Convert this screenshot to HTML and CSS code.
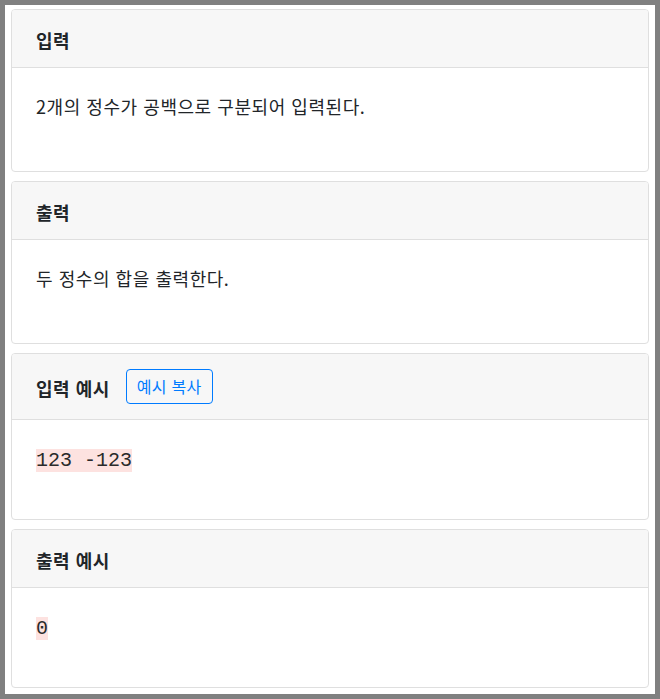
FILE: index.html
```html
<!DOCTYPE html>
<html lang="ko">
<head>
<meta charset="utf-8">
<title>문제</title>
<link rel="stylesheet" href="styles.css">
</head>
<body>
<div class="frame">
  <section class="card">
    <div class="card-header"><h3 class="title">입력</h3></div>
    <div class="card-body text-body"><p>2개의 정수가 공백으로 구분되어 입력된다.</p></div>
  </section>
  <section class="card">
    <div class="card-header"><h3 class="title">출력</h3></div>
    <div class="card-body text-body"><p>두 정수의 합을 출력한다.</p></div>
  </section>
  <section class="card">
    <div class="card-header tall"><h3 class="title">입력 예시</h3><button class="copy-btn" type="button">예시 복사</button></div>
    <div class="card-body code-body"><pre class="sample"><code>123 -123</code></pre></div>
  </section>
  <section class="card">
    <div class="card-header"><h3 class="title">출력 예시</h3></div>
    <div class="card-body code-body"><pre class="sample"><code>0</code></pre></div>
  </section>
</div>
</body>
</html>
```
FILE: styles.css
```css
html, body {
  margin: 0;
  padding: 0;
}
body {
  width: 660px;
  height: 699px;
  font-family: "Noto Sans CJK KR", "Noto Sans", sans-serif;
  color: #212529;
  background: #ffffff;
}
.frame {
  box-sizing: border-box;
  width: 660px;
  height: 699px;
  border: 5px solid #808080;
  background: #ffffff;
  padding: 4px 6px 0 6px;
  display: flex;
  flex-direction: column;
  gap: 9px;
}
.card {
  border: 1px solid #dfdfdf;
  border-radius: 4px;
  background: #ffffff;
  overflow: hidden;
}
.card-header {
  box-sizing: border-box;
  min-height: 58px;
  background: #f7f7f7;
  border-bottom: 1px solid #dfdfdf;
  padding: 0 24px;
  display: flex;
  align-items: center;
  gap: 16px;
}
.card-header.tall {
  min-height: 66px;
}
.title {
  margin: 2px 0 0 0;
  font-size: 18px;
  font-weight: 700;
  letter-spacing: 0.5px;
  line-height: 24px;
}
.copy-btn {
  box-sizing: border-box;
  height: 35px;
  padding: 0 10px;
  border: 1px solid #007bff;
  border-radius: 4px;
  background: transparent;
  color: #007bff;
  font-family: "Noto Sans CJK KR", "Noto Sans", sans-serif;
  font-size: 16px;
  letter-spacing: 0.3px;
  line-height: 33px;
}
.text-body {
  padding: 25px 24px 52px 24px;
}
.text-body p {
  margin: 0;
  font-size: 18px;
  letter-spacing: 0.55px;
  line-height: 26px;
}
.code-body {
  padding: 28px 24px 46px 24px;
}
.sample {
  margin: 0;
  font-family: "Liberation Mono", monospace;
  font-size: 20px;
  line-height: 25px;
}
.sample code {
  font-family: inherit;
  background: #fde2e0;
  color: #2a2a2a;
}
```
